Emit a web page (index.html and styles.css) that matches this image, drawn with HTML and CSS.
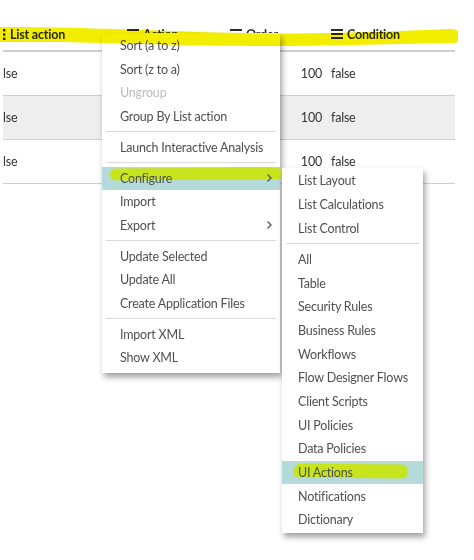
FILE: index.html
```html
<!DOCTYPE html>
<html lang="en">

<head>
    <meta charset="utf-8">
    <meta name="viewport" content="width=device-width, initial-scale=1.0">
    <title>List context menu</title>
    <link rel="stylesheet" href="styles.css">
</head>

<body>
    <div class="liste">
        <div class="raekke hoved">
            <div class="celle">
                <svg class="prikker" width="3" height="11" viewBox="0 0 3 11"><rect x="0" y="0" width="2.4" height="2.4"/><rect x="0" y="4.3" width="2.4" height="2.4"/><rect x="0" y="8.6" width="2.4" height="2.4"/></svg>
                List action
            </div>
            <div class="celle">
                <svg class="burger" width="12" height="10" viewBox="0 0 12 10"><rect y="0" width="12" height="2"/><rect y="4" width="12" height="2"/><rect y="8" width="12" height="2"/></svg>
                Action
            </div>
            <div class="celle">
                <svg class="burger" width="12" height="10" viewBox="0 0 12 10"><rect y="0" width="12" height="2"/><rect y="4" width="12" height="2"/><rect y="8" width="12" height="2"/></svg>
                Order
            </div>
            <div class="celle">
                <svg class="burger" width="12" height="10" viewBox="0 0 12 10"><rect y="0" width="12" height="2"/><rect y="4" width="12" height="2"/><rect y="8" width="12" height="2"/></svg>
                Condition
            </div>
        </div>
        <div class="raekke">
            <div class="celle">lse</div>
            <div class="celle"></div>
            <div class="celle tal">100</div>
            <div class="celle">false</div>
        </div>
        <div class="raekke graa">
            <div class="celle">lse</div>
            <div class="celle"></div>
            <div class="celle tal">100</div>
            <div class="celle">false</div>
        </div>
        <div class="raekke">
            <div class="celle">lse</div>
            <div class="celle"></div>
            <div class="celle tal">100</div>
            <div class="celle">false</div>
        </div>
    </div>

    <ul class="menu hovedmenu">
        <li>Sort (a to z)</li>
        <li>Sort (z to a)</li>
        <li class="slukket">Ungroup</li>
        <li>Group By List action</li>
        <li class="streg"></li>
        <li>Launch Interactive Analysis</li>
        <li class="streg"></li>
        <li class="valgt konfig"><span>Configure</span><svg class="pil" width="7" height="10" viewBox="0 0 7 10"><path d="M1.5 1.5L5 5L1.5 8.5"/></svg></li>
        <li>Import</li>
        <li><span>Export</span><svg class="pil" width="7" height="10" viewBox="0 0 7 10"><path d="M1.5 1.5L5 5L1.5 8.5"/></svg></li>
        <li class="streg"></li>
        <li>Update Selected</li>
        <li>Update All</li>
        <li>Create Application Files</li>
        <li class="streg"></li>
        <li>Import XML</li>
        <li>Show XML</li>
    </ul>

    <ul class="menu undermenu">
        <li>List Layout</li>
        <li>List Calculations</li>
        <li>List Control</li>
        <li class="streg"></li>
        <li>All</li>
        <li>Table</li>
        <li>Security Rules</li>
        <li>Business Rules</li>
        <li>Workflows</li>
        <li>Flow Designer Flows</li>
        <li>Client Scripts</li>
        <li>UI Policies</li>
        <li>Data Policies</li>
        <li class="valgt handling"><span>UI Actions</span></li>
        <li>Notifications</li>
        <li>Dictionary</li>
    </ul>

    <!-- gul overstregning fra skærmbilledet -->
    <svg class="tusch" width="474" height="60" viewBox="0 0 474 60">
        <path d="M0 27 C60 27 120 29 200 32 C260 34 330 34 400 31 L450 29 C456 29 458 30 458 33 L458 40 C458 43 455 43 450 43 C380 44 320 46 260 46 C190 46 120 43 60 42 L0 42 Z"/>
    </svg>
</body>

</html>
```

FILE: styles.css
```css
* {
    box-sizing: border-box;
}

body {
    margin: 0;
    background-color: #fff;
    font-family: Lato, "Noto Sans", sans-serif;
    font-size: 12.5px;
    letter-spacing: -0.2px;
    color: #333;
    width: 474px;
    height: 560px;
    overflow: hidden;
    position: relative;
}

.liste {
    margin: 20px 0 0 3px;
    width: 452px;
}

.raekke {
    display: grid;
    grid-template-columns: 124px 103px 101px 1fr;
    height: 44px;
    align-items: center;
    border-bottom: 1px solid #cfcfcf;
}

.raekke.hoved {
    height: 32px;
    border-bottom: 2px solid #d0d0d0;
    font-weight: 700;
    color: #2b2b2b;
    padding-bottom: 2px;
}

.graa {
    background-color: #eeeeee;
}

.celle {
    display: flex;
    align-items: center;
    gap: 4px;
    white-space: nowrap;
}

.tal {
    justify-content: flex-end;
    padding-right: 9px;
}

.prikker,
.burger {
    fill: #2b2b2b;
}

.prikker {
    margin-right: 0;
}

.menu {
    position: absolute;
    margin: 0;
    list-style: none;
    background-color: #fff;
    box-shadow: 2px 4px 6px rgba(0, 0, 0, 0.38);
    color: #505050;
    z-index: 2;
}

.hovedmenu {
    left: 102px;
    top: 33px;
    width: 178px;
    padding: 1px 0 3px 0;
}

.undermenu {
    left: 282px;
    top: 168px;
    width: 141px;
    padding: 1px 0 1.5px 0;
    z-index: 3;
}

.menu li {
    display: flex;
    align-items: center;
    justify-content: space-between;
    height: 23.5px;
    padding: 0 7px 0 18px;
    position: relative;
    white-space: nowrap;
}

.undermenu li {
    height: 23.7px;
    padding-left: 16px;
}

.menu li.streg {
    height: 1px;
    padding: 0;
    margin: 3px 4px 3.5px 4px;
    background-color: #dadada;
}

.slukket {
    color: #bdbdbd;
}

.pil {
    fill: none;
    stroke: #555;
    stroke-width: 1.3;
}

.menu li.valgt {
    background-color: #b4dada;
}

.menu li.valgt span,
.menu li.valgt svg {
    position: relative;
    z-index: 1;
}

.konfig::before {
    content: "";
    position: absolute;
    left: 8px;
    top: 1px;
    width: 172px;
    height: 12px;
    border-radius: 6px;
    background-color: #c8e41c;
    transform: rotate(-0.4deg);
}

.handling::before {
    content: "";
    position: absolute;
    left: 12px;
    top: 3px;
    width: 114px;
    height: 14px;
    border-radius: 7px 6px 6px 4px;
    background-color: #c8e41c;
    transform: rotate(0.6deg);
}

.tusch {
    position: absolute;
    left: 0;
    top: 0;
    z-index: 5;
    fill: #f3ee00;
    mix-blend-mode: multiply;
    pointer-events: none;
}
```
